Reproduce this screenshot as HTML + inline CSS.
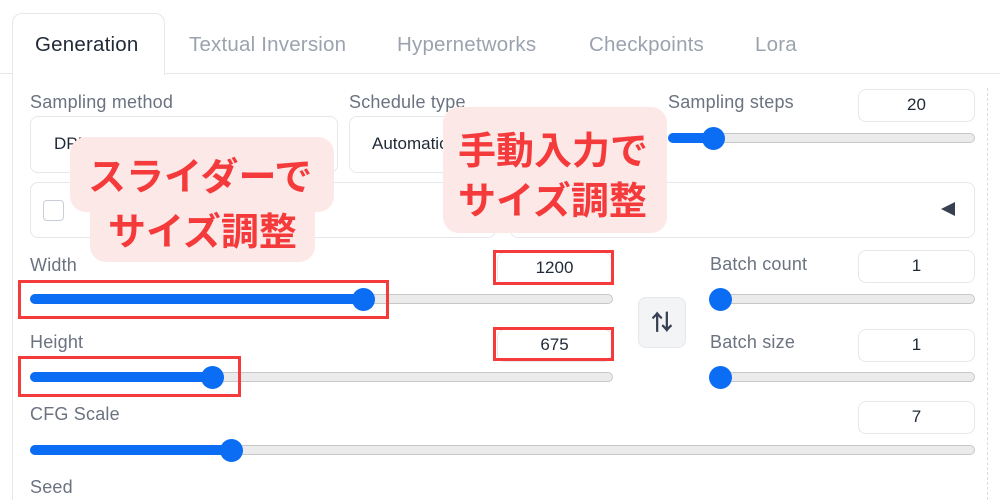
<!DOCTYPE html>
<html><head><meta charset="utf-8"><style>
*{box-sizing:border-box;margin:0;padding:0}
body{width:1000px;height:500px;overflow:hidden;background:#fff;font-family:"Liberation Sans","Noto Sans CJK JP",sans-serif;position:relative}
.a{position:absolute}
.lbl{position:absolute;font-size:18px;color:#6b7280;line-height:20px;letter-spacing:0.2px}
.tab{position:absolute;top:34px;font-size:20.5px;color:#9ca3af;line-height:22px;letter-spacing:0.2px}
.box{position:absolute;border:1px solid #e5e7eb;border-radius:8px;background:#fff;overflow:hidden}
.num{position:absolute;border:1px solid #e5e7eb;border-radius:8px;background:#fff;text-align:center;font-size:17px;color:#1f2937;line-height:30px;height:33px}
.tr{position:absolute;height:10px;border-radius:5px;background:#ebebeb;border:1px solid #c8c8c8}
.fill{position:absolute;height:10px;border-radius:5px;background:#0b6cf4}
.th{position:absolute;width:23px;height:23px;border-radius:50%;background:#0b6cf4}
.red{position:absolute;border:3px solid #f43a3a}
.call{position:absolute;background:#fde8e8;border-radius:16px}
.ct{position:absolute;color:#f43a3a;font-weight:bold;font-size:38px;line-height:44px;white-space:nowrap;font-family:"Noto Sans CJK JP",sans-serif}
</style></head><body>
<div class="a" style="left:0;top:73px;width:1000px;height:1px;background:#e5e7eb"></div>
<div class="a" style="left:12px;top:13px;width:153px;height:62px;border:1px solid #e5e7eb;border-bottom:none;border-radius:10px 10px 0 0;background:#fff"></div>
<div class="a" style="left:12px;top:74px;width:1px;height:426px;background:#e5e7eb"></div>
<div class="tab" style="left:35px;color:#1f2937">Generation</div>
<div class="tab" style="left:189px">Textual Inversion</div>
<div class="tab" style="left:397px">Hypernetworks</div>
<div class="tab" style="left:589px">Checkpoints</div>
<div class="tab" style="left:755px">Lora</div>
<div class="a" style="left:987px;top:88px;height:412px;border-left:1px dashed #dcdcdc"></div>

<div class="lbl" style="left:30px;top:92px">Sampling method</div>
<div class="lbl" style="left:349px;top:92px">Schedule type</div>
<div class="lbl" style="left:668px;top:92px">Sampling steps</div>
<div class="box" style="left:30px;top:116px;width:308px;height:57px"></div>
<div class="a" style="left:54px;top:134px;font-size:17px;color:#1f2937">DPM</div>
<div class="box" style="left:349px;top:116px;width:120px;height:57px"><div class="a" style="left:22px;top:17px;font-size:17px;color:#1f2937;white-space:nowrap">Automatic</div></div>
<div class="num" style="left:858px;top:89px;width:117px">20</div>
<div class="tr" style="left:668px;top:133px;width:307px"></div><div class="fill" style="left:668px;top:133px;width:45px"></div><div class="th" style="left:702px;top:127px"></div>

<div class="box" style="left:30px;top:182px;width:466px;height:56px"></div>
<div class="a" style="left:43px;top:200px;width:21px;height:21px;border:1px solid #c9ced6;border-radius:4px"></div>
<div class="box" style="left:510px;top:182px;width:465px;height:56px"></div>
<div class="a" style="left:941px;top:202px;width:0;height:0;border-top:7px solid transparent;border-bottom:7px solid transparent;border-right:14px solid #374151"></div>

<div class="lbl" style="left:30px;top:255px">Width</div>
<div class="num" style="left:497px;top:252px;width:115px">1200</div>
<div class="tr" style="left:30px;top:294px;width:583px"></div><div class="fill" style="left:30px;top:294px;width:334px"></div><div class="th" style="left:352px;top:288px"></div>
<div class="lbl" style="left:30px;top:332px">Height</div>
<div class="num" style="left:497px;top:329px;width:115px">675</div>
<div class="tr" style="left:30px;top:372px;width:583px"></div><div class="fill" style="left:30px;top:372px;width:183px"></div><div class="th" style="left:201px;top:366px"></div>

<div class="a" style="left:638px;top:297px;width:48px;height:51px;border:1px solid #e5e7eb;border-radius:8px;background:#f3f4f6;text-align:center;line-height:49px;font-size:22px;color:#374151;font-weight:bold">⇅</div>

<div class="lbl" style="left:710px;top:254px">Batch count</div>
<div class="num" style="left:858px;top:250px;width:117px">1</div>
<div class="tr" style="left:710px;top:294px;width:265px"></div><div class="th" style="left:709px;top:288px"></div>
<div class="lbl" style="left:710px;top:332px">Batch size</div>
<div class="num" style="left:858px;top:329px;width:117px">1</div>
<div class="tr" style="left:710px;top:372px;width:265px"></div><div class="th" style="left:709px;top:366px"></div>

<div class="lbl" style="left:30px;top:404px">CFG Scale</div>
<div class="num" style="left:858px;top:401px;width:117px">7</div>
<div class="tr" style="left:30px;top:445px;width:945px"></div><div class="fill" style="left:30px;top:445px;width:202px"></div><div class="th" style="left:220px;top:439px"></div>
<div class="lbl" style="left:30px;top:477px">Seed</div>

<div class="red" style="left:18px;top:280px;width:371px;height:39px"></div>
<div class="red" style="left:18px;top:356px;width:223px;height:41px"></div>
<div class="red" style="left:493px;top:250px;width:121px;height:35px"></div>
<div class="red" style="left:493px;top:327px;width:121px;height:34px"></div>

<div class="call" style="left:70px;top:137px;width:264px;height:75px"></div>
<div class="call" style="left:90px;top:190px;width:225px;height:72px"></div>
<div class="ct" style="left:88px;top:152px">スライダーで</div>
<div class="ct" style="left:108px;top:207px">サイズ調整</div>
<div class="call" style="left:443px;top:107px;width:224px;height:126px"></div>
<div class="ct" style="left:458px;top:126px">手動入力で</div>
<div class="ct" style="left:458px;top:176px">サイズ調整</div>
</body></html>
